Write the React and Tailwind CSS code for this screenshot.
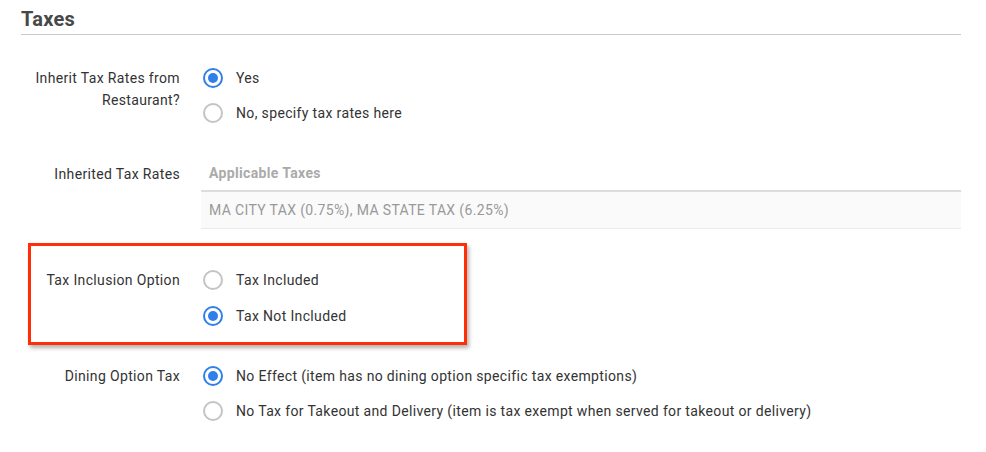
import React from "react";

function Radio({ checked, label }) {
  return (
    <div className="flex items-center h-[36px]">
      {checked ? (
        <span className="ml-[2px] w-[20px] h-[20px] rounded-full border-2 border-[#2f80e8] flex items-center justify-center shrink-0">
          <span className="w-[10px] h-[10px] rounded-full bg-[#2f80e8]" />
        </span>
      ) : (
        <span className="ml-[2px] w-[20px] h-[20px] rounded-full border-2 border-[#c4c4c4] shrink-0" />
      )}
      <span className="ml-[13px] text-[14px] tracking-[0.35px] text-[#333]">{label}</span>
    </div>
  );
}

function Row({ label, children, className = "" }) {
  return (
    <div className={`flex ${className}`}>
      <div className="w-[159px] shrink-0 text-right text-[14px] tracking-[0.35px] leading-[22px] text-[#333] pt-[7px]">
        {label}
      </div>
      <div className="ml-[21px] flex-1">{children}</div>
    </div>
  );
}

export default function App() {
  return (
    <div className="w-[986px] h-[452px] bg-white" style={{ fontFamily: "Roboto, 'Liberation Sans', sans-serif" }}>
      <div className="ml-[21px] w-[940px]">
        <div className="pt-[7px] pb-[3px] border-b border-[#cbc8d2]">
          <h2 className="text-[20px] tracking-[0.3px] leading-[24px] font-bold text-[#484848]">Taxes</h2>
        </div>

        <Row className="mt-[25px]" label={<>Inherit Tax Rates from<br />Restaurant?</>}>
          <Radio checked label="Yes" />
          <div className="-mt-[1px]">
            <Radio label="No, specify tax rates here" />
          </div>
        </Row>

        <Row className="mt-[25px]" label="Inherited Tax Rates">
          <div>
            <div className="h-[36px] flex items-center pl-[8px] border-b-2 border-[#dddddd] text-[14px] tracking-[0.35px] font-bold text-[#aaaaaa]">
              Applicable Taxes
            </div>
            <div className="h-[37px] flex items-center pl-[8px] bg-[#fafafa] border-b border-[#ebebeb] text-[14px] tracking-[0.35px] text-[#999999]">
              MA CITY TAX (0.75%), MA STATE TAX (6.25%)
            </div>
          </div>
        </Row>

        <div className="relative mt-[33px]">
          <Row label="Tax Inclusion Option">
            <Radio label="Tax Included" />
            <Radio checked label="Tax Not Included" />
          </Row>
          <div className="absolute left-[7px] top-[-19px] w-[439px] h-[102px] border-[3px] border-[#ff2d08] shadow-[2px_3px_4px_rgba(0,0,0,0.3)] pointer-events-none" />
        </div>

        <Row className="mt-[24px]" label="Dining Option Tax">
          <Radio checked label="No Effect (item has no dining option specific tax exemptions)" />
          <div className="-mt-[1px]">
            <Radio label="No Tax for Takeout and Delivery (item is tax exempt when served for takeout or delivery)" />
          </div>
        </Row>
      </div>
    </div>
  );
}
